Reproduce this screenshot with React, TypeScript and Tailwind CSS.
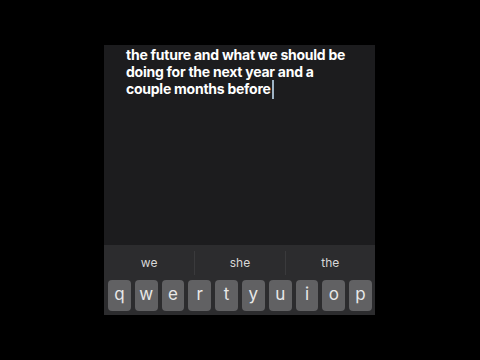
const keys = ["q", "w", "e", "r", "t", "y", "u", "i", "o", "p"];
const suggestions = ["we", "she", "the"];

export default function App() {
  return (
    <div className="w-[480px] h-[360px] bg-black overflow-hidden pt-[45px] pl-[104px]">
      <div className="w-[271px] h-[270px] bg-[#1c1c1e] flex flex-col">
        <div className="flex-1 pl-[22px] pr-[18px] pt-[1px]">
          <p
            className="text-[14px] leading-[17px] font-bold text-white tracking-[-0.25px]"
            style={{ fontFamily: "Inter, 'Noto Sans', sans-serif" }}
          >
            the future and what we should be doing for the next year and a couple months before
            <span className="inline-block w-[2px] h-[19px] bg-[#9fb3c4] align-[-5px] ml-[1px]" />
          </p>
        </div>
        <div
          className="h-[70px] bg-[#2c2c2e] flex flex-col"
          style={{ fontFamily: "Inter, 'Noto Sans', sans-serif" }}
        >
          <div className="h-[35px] flex items-center">
            {suggestions.map((s, i) => (
              <div key={s} className="flex-1 flex items-center h-full">
                {i > 0 && <div className="w-px h-[24px] bg-[#3a3a3c]" />}
                <div className="flex-1 text-center text-[12px] text-[#d8d8d8]">{s}</div>
              </div>
            ))}
          </div>
          <div className="flex gap-[4px] pl-[4px] pr-[3px] h-[31px]">
            {keys.map((k) => (
              <div
                key={k}
                className="flex-1 rounded-[4px] bg-[#616163] flex items-center justify-center text-[17px] text-[#e8e8e8] pb-[1px]"
              >
                {k}
              </div>
            ))}
          </div>
        </div>
      </div>
    </div>
  );
}
